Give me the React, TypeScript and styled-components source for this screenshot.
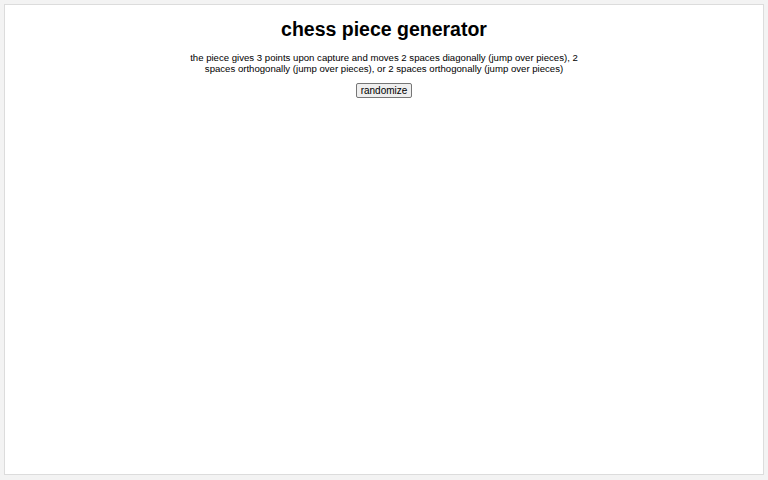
import React, { useState } from "react";
import styled, { createGlobalStyle } from "styled-components";

const GlobalStyle = createGlobalStyle`
  html, body {
    margin: 0;
    padding: 0;
    background: #f3f3f3;
    font-family: "Liberation Sans", Arial, sans-serif;
  }
`;

const Page = styled.div`
  box-sizing: border-box;
  height: 480px;
  padding: 4px 4px 5px 4px;
`;

const Card = styled.main`
  box-sizing: border-box;
  height: 100%;
  background: #ffffff;
  border: 1px solid #dcdcdc;
  display: flex;
  flex-direction: column;
  align-items: center;
  padding-top: 13px;
  color: #000;
`;

const Title = styled.h1`
  margin: 0;
  font-size: 19.5px;
  font-weight: bold;
  line-height: 22px;
`;

const Description = styled.p`
  margin: 12px 0 0;
  max-width: 400px;
  font-size: 9.6px;
  line-height: 11px;
  text-align: center;
`;

const RandomizeButton = styled.button`
  margin-top: 9px;
  font-family: "Liberation Sans", Arial, sans-serif;
  font-size: 10px;
  line-height: 11px;
  padding: 1px 4px;
  background: #efefef;
  border: 1px solid #767676;
  border-radius: 2px;
  color: #000;
`;

const moves = [
  "2 spaces diagonally (jump over pieces)",
  "2 spaces orthogonally (jump over pieces)",
  "2 spaces orthogonally (jump over pieces)",
];

export default function App() {
  const [points] = useState(3);
  const text = `the piece gives ${points} points upon capture and moves ${moves[0]}, ${moves[1]}, or ${moves[2]}`;
  return (
    <>
      <GlobalStyle />
      <Page>
        <Card>
          <Title>chess piece generator</Title>
          <Description>{text}</Description>
          <RandomizeButton>randomize</RandomizeButton>
        </Card>
      </Page>
    </>
  );
}
